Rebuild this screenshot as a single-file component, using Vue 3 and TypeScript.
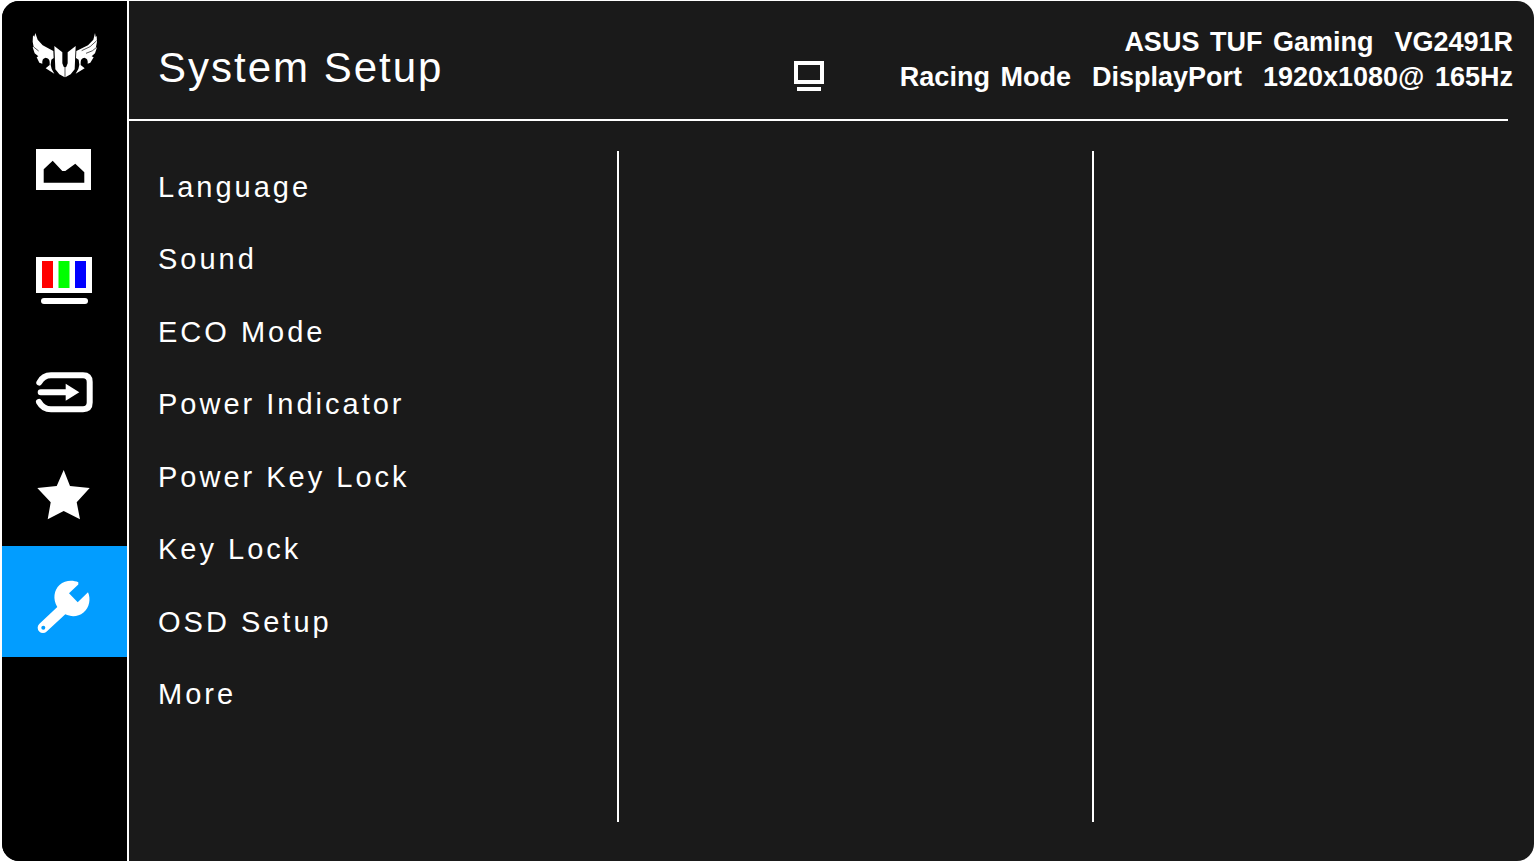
<script setup lang="ts">
import { ref } from 'vue'

type Section = 'image' | 'color' | 'input' | 'favorite' | 'system'

const sections: { id: Section; label: string }[] = [
  { id: 'image', label: 'Image' },
  { id: 'color', label: 'Color' },
  { id: 'input', label: 'Input Select' },
  { id: 'favorite', label: 'MyFavorite' },
  { id: 'system', label: 'System Setup' },
]

const active = ref<Section>('system')

const entries: string[] = [
  'Language',
  'Sound',
  'ECO Mode',
  'Power Indicator',
  'Power Key Lock',
  'Key Lock',
  'OSD Setup',
  'More',
]

const status: string[][] = [
  ['ASUS TUF Gaming', 'VG2491R'],
  ['Racing Mode', 'DisplayPort', '1920x1080@ 165Hz'],
]
</script>

<template>
  <div class="screen">
    <div class="osd">
      <nav class="sidebar" aria-label="Sections">
        <svg class="logo" viewBox="6 3 375 303" aria-hidden="true">
          <g fill="#fff">
            <path d="M106 99 L113 119 L128 136 L160 153 L161 174 L154 179 L152 194 L155 207 L163 221 L137 205 L149 195 V186 Q148 174 137 173 Q125 175 127 191 L118 188 L110 172 L115 169 L104 160 L98 142 L101 141 L98 125 L99 106 L103 110 Z" />
            <path d="M285 99 L280 119 L264 136 L229 153 L228 174 L236 179 L238 194 L235 207 L227 221 L254 205 L242 195 V186 Q243 174 253 173 Q265 175 263 191 L271 188 L281 172 L275 169 L285 160 L291 142 L288 141 L291 125 L290 108 L287 111 Z" />
            <path d="M163 138 L187 157 L187 190 L191 200 L194 202 L194 232 L178 223 L166 208 Z" />
            <path d="M227 138 L203 157 L203 190 L199 200 L196 202 L196 232 L212 223 L224 208 Z" />
          </g>
          <path
            d="M245 152 Q273 143 290 122 M258 160 Q280 154 291 141 M101 141 L116 153"
            fill="none" stroke="#000" stroke-width="2"
          />
        </svg>
        <button
          v-for="s in sections"
          :key="s.id"
          type="button"
          class="tab"
          :class="{ active: s.id === active }"
          :aria-label="s.label"
          :aria-pressed="s.id === active"
          @click="active = s.id"
        >
          <svg viewBox="0 0 125 111" aria-hidden="true">
            <template v-if="s.id === 'image'">
              <rect x="34" y="47" width="55" height="41" fill="#fff" />
              <path d="M41.7 67.3 L50.7 58.7 L60.3 69 H63.3 L73.3 61.7 L82.3 70.3 V80.7 H41.7 Z" fill="#000" />
            </template>
            <template v-else-if="s.id === 'color'">
              <rect x="34" y="44" width="56" height="36" fill="#fff" />
              <rect x="40" y="48" width="11" height="27" fill="#f00" />
              <rect x="56.5" y="48" width="11" height="27" fill="#0f0" />
              <rect x="73" y="48" width="11" height="27" fill="#00f" />
              <rect x="39" y="85" width="47" height="6" rx="3" fill="#fff" />
            </template>
            <template v-else-if="s.id === 'input'">
              <path
                d="M37.3 58.5 Q41 51.3 49 51.3 H81 Q87.7 51.3 87.7 58 V78.6 Q87.7 85.3 81 85.3 H49 Q41 85.3 37 78 M38.7 68.3 H65"
                fill="none" stroke="#fff" stroke-width="6" stroke-linecap="round"
              />
              <path d="M63.7 59.7 L77.3 68.2 L63.7 76.7 Z" fill="#fff" />
            </template>
            <path
              v-else-if="s.id === 'favorite'"
              d="M61.7 35 L68 51 L87.7 53 L74.7 67.3 L78 84.3 L61.7 76 L45.7 84.3 L48.7 67.3 L35.3 53 L54.7 51 Z"
              fill="#fff"
            />
            <template v-else>
              <path
                d="M76.3 36.3 C71 34 63 34 57.5 39 C52 44 50.5 53 55.3 61 L37.2 78 A5.3 5.3 0 0 0 44.7 85.5 L63.3 68.3 C69 71 76 71 81.5 66.5 C87.5 61.5 89 53 86 46.3 L75.7 56.3 L67 47.3 L76.3 38.5 Z"
                fill="#fff"
              />
              <circle cx="41.3" cy="81.7" r="2" fill="#029dff" />
            </template>
          </svg>
        </button>
      </nav>

      <main class="main">
        <header class="header">
          <h1>System Setup</h1>
          <svg class="monitor" viewBox="0 0 30 30" aria-hidden="true">
            <rect x="2" y="2" width="26" height="19" fill="none" stroke="#fff" stroke-width="4" />
            <rect x="3" y="26" width="24" height="4" fill="#fff" />
          </svg>
          <div class="status">
            <p v-for="(line, i) in status" :key="i">
              <span v-for="part in line" :key="part" class="part">
                <template v-for="(word, w) in part.split(' ')" :key="w">{{ w ? ' ' : '' }}<span class="word">{{ word }}</span></template>
              </span>
            </p>
          </div>
        </header>

        <div class="columns">
          <ul class="menu">
            <li v-for="entry in entries" :key="entry">
              <button type="button">{{ entry }}</button>
            </li>
          </ul>
          <div class="pane"></div>
          <div class="pane"></div>
        </div>
      </main>
    </div>
  </div>
</template>

<style>
body {
  margin: 0;
  background: #fff;
}
</style>

<style scoped>
.screen {
  box-sizing: border-box;
  display: flex;
  min-height: 100vh;
  padding: 1px 2px 3px;
  font-family: 'Liberation Sans', Arial, sans-serif;
  color: #fff;
}

.osd {
  flex: 1;
  display: flex;
  overflow: hidden;
  border-radius: 17px;
  background: #1a1a1a;
}

.sidebar {
  flex: none;
  display: flex;
  flex-direction: column;
  width: 125px;
  border-right: 2px solid #fff;
  background: #000;
}

.sidebar svg {
  display: block;
  width: 100%;
}

.logo {
  flex: none;
}

button {
  margin: 0;
  padding: 0;
  border: 0;
  background: none;
  color: inherit;
  font: inherit;
  letter-spacing: inherit;
  text-align: left;
  cursor: pointer;
}

.tab.active {
  background: #029dff;
}

.main {
  flex: 1;
  display: flex;
  flex-direction: column;
  min-width: 0;
}

.header {
  display: flex;
  align-items: flex-start;
  height: 118px;
  margin-right: 26px;
  border-bottom: 2px solid #fff;
}

h1 {
  flex: 1;
  margin: 43px 0 0 29px;
  font-size: 42px;
  font-weight: 400;
  line-height: 48px;
  letter-spacing: 2px;
}

.monitor {
  flex: none;
  width: 30px;
  height: 30px;
  margin: 60px 76px 0 0;
}

.status {
  margin: 24px -5px 0 0;
  font-size: 27px;
  font-weight: 700;
  line-height: 35px;
  white-space: nowrap;
}

.status p {
  display: flex;
  justify-content: flex-end;
  gap: 21px;
  margin: 0;
}

.word + .word {
  margin-left: 3px;
}

.columns {
  flex: 1;
  display: grid;
  grid-template-columns: 488fr 475fr 442fr;
  margin: 30px 0 39px;
}

.menu {
  display: flex;
  flex-direction: column;
  justify-content: space-between;
  margin: 0;
  padding: 19px 0 111px 29px;
  list-style: none;
  font-size: 29px;
  line-height: 34px;
  letter-spacing: 3px;
}

.menu button {
  display: block;
  width: 100%;
}

.pane {
  border-left: 2px solid #fff;
}
</style>
